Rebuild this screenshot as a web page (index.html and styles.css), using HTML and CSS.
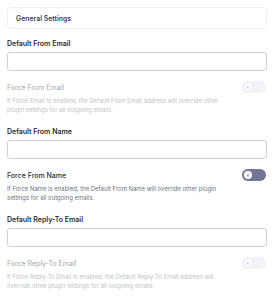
FILE: index.html
```html
<!DOCTYPE html>
<html>
<head>
<meta charset="utf-8">
<link rel="stylesheet" href="styles.css">
</head>
<body>
<div class="page">
  <div class="card">General Settings</div>

  <div class="field first">
    <div class="label">Default From Email</div>
    <div class="input"></div>
  </div>

  <div class="toggle-block disabled">
    <div class="toggle-row">
      <div class="tlabel">Force From Email</div>
      <div class="switch"><span class="knob">×</span></div>
    </div>
    <div class="desc">If Force Email is enabled, the Default From Email address will override other plugin settings for all outgoing emails.</div>
  </div>

  <div class="field">
    <div class="label">Default From Name</div>
    <div class="input"></div>
  </div>

  <div class="toggle-block">
    <div class="toggle-row">
      <div class="tlabel">Force From Name</div>
      <div class="switch"><span class="knob">×</span></div>
    </div>
    <div class="desc">If Force Name is enabled, the Default From Name will override other plugin settings for all outgoing emails.</div>
  </div>

  <div class="field">
    <div class="label">Default Reply-To Email</div>
    <div class="input"></div>
  </div>

  <div class="toggle-block disabled">
    <div class="toggle-row">
      <div class="tlabel">Force Reply-To Email</div>
      <div class="switch"><span class="knob">×</span></div>
    </div>
    <div class="desc">If Force Reply-To Email is enabled, the Default Reply-To Email address will override other plugin settings for all outgoing emails.</div>
  </div>
</div>
</body>
</html>
```
FILE: styles.css
```css
* { box-sizing: border-box; }
html, body { margin: 0; padding: 0; background: #ffffff; }
body { font-family: Inter, "Noto Sans", sans-serif; }
.page { padding: 7px 8px 0 7px; display: flex; flex-direction: column; }
.card {
  height: 22px;
  border: 1px solid #eef0f3;
  border-radius: 4px;
  padding-left: 8px;
  display: flex;
  align-items: center;
  font-size: 6.9px;
  font-weight: 600;
  color: #3d4250;
}
.field { margin-top: 12.5px; display: flex; flex-direction: column; }
.field.first { margin-top: 9.5px; }
.label {
  font-size: 7px;
  font-weight: 600;
  color: #262b37;
  line-height: 9px;
}
.input {
  margin-top: 4px;
  height: 19px;
  border: 1px solid #cfd0dc;
  border-radius: 3px;
}
.toggle-block { margin-top: 10.5px; display: flex; flex-direction: column; }
.toggle-row { display: flex; justify-content: space-between; align-items: center; height: 12px; }
.tlabel { font-size: 7px; font-weight: 500; color: #2b303b; }
.switch {
  width: 24px; height: 11.5px; border-radius: 6px;
  background: #72749a;
  display: flex; align-items: center; padding-left: 1.5px;
  margin-right: 1px;
}
.knob {
  width: 8.5px; height: 8.5px; border-radius: 50%;
  background: #ffffff;
  font-size: 6px; line-height: 8.5px; text-align: center;
  color: #72749a;
}
.desc {
  margin-top: 3px;
  font-size: 5.95px;
  line-height: 9px;
  color: #6b7280;
  padding-right: 36px;
}
.disabled .tlabel { color: #a4a8b0; font-weight: 400; }
.disabled .desc { color: #bfc2c8; }
.disabled .switch { background: #f2f3f6; }
.disabled .knob { color: #b5b7c0; box-shadow: 0 0 1px rgba(0,0,0,0.18); }
```
